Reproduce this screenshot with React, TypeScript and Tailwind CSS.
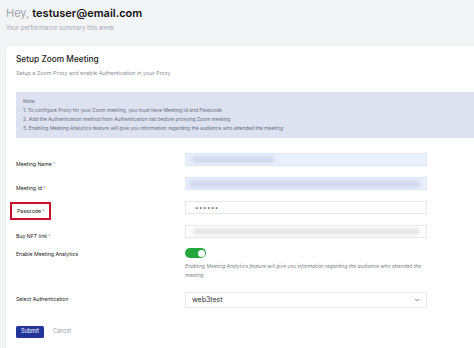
import { ChevronDown } from "lucide-react";

const Field = ({
  label,
  children,
  boxed = false,
}: {
  label: string;
  children: React.ReactNode;
  boxed?: boolean;
}) => (
  <div className="flex items-center h-[13px]">
    <div className="w-[169px] shrink-0">
      <span
        className={
          boxed
            ? "inline-flex items-center -ml-[6px] px-[5px] h-[18px] w-[41px] border-2 border-[#c8102e] text-[5.2px] text-[#222]"
            : "text-[5.2px] text-[#222]"
        }
      >
        {label}
        <span className="text-[#999] ml-[1px]">*</span>
      </span>
    </div>
    {children}
  </div>
);

const App = () => {
  return (
    <div
      className="w-[474px] h-[348px] overflow-hidden bg-[#f3f4f6] pl-[5px]"
      style={{ fontFamily: "Inter, 'Noto Sans', sans-serif" }}
    >
      {/* greeting */}
      <div className="pt-[5px] pl-[1px]">
        <h1 className="text-[11px] leading-[16px] text-[#a0a5ad]">
          Hey, <span className="font-semibold text-[#111]">testuser@email.com</span>
        </h1>
        <p className="text-[6px] leading-[9px] mt-[2px] text-[#a3a8b0]">
          Your performance summary this week
        </p>
      </div>

      {/* card */}
      <div className="mt-[13px] bg-white rounded-tl-[5px] border-l border-t border-[#eceef1] pl-[10px] pt-[8px] h-[320px]">
        <h2 className="text-[8.3px] leading-[10px] font-medium text-[#222]">Setup Zoom Meeting</h2>
        <p className="text-[5.4px] leading-[8px] mt-[5px] text-[#8a8f98]">
          Setup a Zoom Proxy and enable Authentication in your Proxy
        </p>

        {/* note */}
        <div className="mt-[15px] bg-[#dde1f0] h-[46px] pl-[7px] pt-[5px] text-[4.9px] leading-[9px] text-[#6b7080]">
          <p>Note:</p>
          <p>1. To configure Proxy for your Zoom meeting, you must have Meeting Id and Passcode</p>
          <p>2. Add the Authentication method from Authentication tab bedore proxying Zoom meeting</p>
          <p>3. Enabling Meeting Analytics feature will give you information regarding the audiance who attended the meeting</p>
        </div>

        {/* form */}
        <div className="mt-[15px] flex flex-col gap-[11px]">
          <Field label="Meeting Name">
            <div className="w-[242px] h-[13px] bg-[#e8effd] border border-[#dfe6f5] flex items-center pl-[6px] overflow-hidden">
              <span className="block w-[82px] h-[5px] bg-[#c9d2e6] blur-[2px]" />
            </div>
          </Field>
          <Field label="Meeting Id">
            <div className="w-[242px] h-[13px] bg-[#e8effd] border border-[#dfe6f5] flex items-center pl-[4px] pr-[6px] overflow-hidden">
              <span className="block flex-1 h-[6px] bg-[#cdd4ea] blur-[2px]" />
            </div>
          </Field>
          <Field label="Passcode" boxed>
            <div className="w-[242px] h-[13px] bg-white border border-[#e5e7eb] flex items-center pl-[9px] text-[6px] tracking-[0.6px] text-[#555]">
              ••••••
            </div>
          </Field>
          <Field label="Buy NFT link">
            <div className="w-[242px] h-[13px] bg-white border border-[#e5e7eb] flex items-center px-[7px] overflow-hidden">
              <span className="block flex-1 h-[5px] bg-[#dcdcdc] blur-[2px]" />
            </div>
          </Field>

          {/* analytics toggle */}
          <div className="flex items-start -mt-[1px]">
            <div className="w-[169px] shrink-0 pt-[2px] text-[5.2px] leading-[8px] text-[#222]">
              Enable Meeting Analytics
            </div>
            <div className="w-[242px]">
              <div className="w-[21px] h-[10px] rounded-full bg-[#22a63d] flex items-center justify-end pr-[1.5px]">
                <span className="block w-[7px] h-[7px] rounded-full bg-white" />
              </div>
              <p className="mt-[4px] text-[4.9px] leading-[9px] italic text-[#7b7f86] pr-[4px]">
                Enabling Meeting Analytics feature will give you information regarding the audiance who attended the meeting
              </p>
            </div>
          </div>

          {/* select */}
          <div className="flex items-center mt-[1px]">
            <div className="w-[169px] shrink-0 text-[5.2px] text-[#222]">Select Authentication</div>
            <div className="w-[242px] h-[16px] bg-white border border-[#e5e7eb] rounded-[1px] flex items-center justify-between pl-[6px] pr-[6px]">
              <span className="text-[7px] text-[#333]">web3test</span>
              <ChevronDown className="w-[6px] h-[6px] text-[#555]" strokeWidth={3} />
            </div>
          </div>

          {/* actions */}
          <div className="flex items-center gap-[9px] mt-[7px]">
            <button className="w-[28px] h-[12px] bg-[#23349b] rounded-[1.5px] text-white text-[5.5px] leading-none">
              Submit
            </button>
            <button className="text-[5.5px] text-[#9ca3af] leading-none">Cancel</button>
          </div>
        </div>
      </div>
    </div>
  );
};

export default App;
